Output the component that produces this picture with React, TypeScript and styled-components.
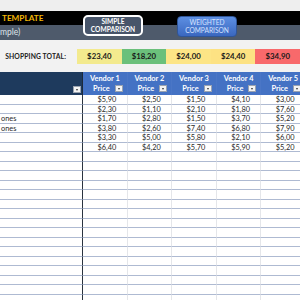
import { Fragment } from "react";
import styled, { createGlobalStyle } from "styled-components";

const GlobalStyle = createGlobalStyle`
  html, body {
    margin: 0;
    padding: 0;
    background: #ffffff;
  }
  body {
    width: 300px;
    height: 300px;
    overflow: hidden;
    font-family: "Lato", "Liberation Sans", sans-serif;
  }
`;

const Sheet = styled.div`
  width: 300px;
  height: 300px;
  overflow: hidden;
  display: flex;
  flex-direction: column;
`;

const TopStrip = styled.div`
  height: 11px;
  background: #eeeeee;
  flex-shrink: 0;
`;

const Banner = styled.div`
  height: 29px;
  flex-shrink: 0;
  display: flex;
  align-items: flex-start;
  background: linear-gradient(to bottom, #000 0 14px, #4e5a6b 14px 29px);
`;

const TitleColumn = styled.div`
  width: 83px;
  display: flex;
  flex-direction: column;
`;

const Title = styled.div`
  height: 14px;
  line-height: 14px;
  padding-left: 2px;
  color: #f2b705;
  font-weight: 700;
  font-size: 8.2px;
  white-space: nowrap;
`;

const Subtitle = styled.div`
  height: 15px;
  line-height: 15px;
  color: #dfe3ea;
  font-size: 8.5px;
  white-space: nowrap;
`;

const ModeButton = styled.div<{ $active?: boolean }>`
  box-sizing: border-box;
  width: 60px;
  height: 21px;
  margin-top: ${({ $active }) => ($active ? "4px" : "5px")};
  margin-left: ${({ $active }) => ($active ? "0" : "34px")};
  border-radius: ${({ $active }) => ($active ? "5px" : "4px")};
  border: ${({ $active }) => ($active ? "2px solid #ffffff" : "1px solid #2f5597")};
  background: ${({ $active }) =>
    $active ? "#48556a" : "linear-gradient(to bottom, #5d8fe2, #3a67bf)"};
  color: ${({ $active }) => ($active ? "#ffffff" : "#d6e2ff")};
  font-weight: ${({ $active }) => ($active ? 700 : 400)};
  font-size: 6.6px;
  line-height: 7.5px;
  display: flex;
  flex-direction: column;
  align-items: center;
  justify-content: center;
  text-align: center;
`;

const TotalsBar = styled.div`
  height: 32px;
  flex-shrink: 0;
  background: #f2f2f2;
  display: flex;
  align-items: flex-start;
  padding-top: 9px;
  box-sizing: border-box;
`;

const TotalsLabel = styled.div`
  width: 83px;
  height: 15px;
  line-height: 15px;
  padding-right: 11px;
  box-sizing: border-box;
  text-align: right;
  font-weight: 700;
  font-size: 6.8px;
  letter-spacing: 0.1px;
  color: #222;
  white-space: nowrap;
`;

const TotalCell = styled.div<{ $bg: string }>`
  width: 44.6px;
  height: 15px;
  line-height: 15px;
  flex-shrink: 0;
  text-align: center;
  background: ${({ $bg }) => $bg};
  font-weight: 700;
  font-size: 7.8px;
  color: #1a1a1a;
`;

const Grid = styled.div`
  display: grid;
  grid-template-columns: 83px repeat(5, 44.6px);
  grid-template-rows: 23px;
  grid-auto-rows: 9.5px;
`;

const HeadCell = styled.div<{ $first?: boolean }>`
  box-sizing: border-box;
  background: ${({ $first }) => ($first ? "#1e3a5d" : "#4472c4")};
  border-right: 1px solid ${({ $first }) => ($first ? "#1e2a3a" : "#4a76c6")};
  color: #ffffff;
  font-weight: 700;
  font-size: 7.4px;
  display: flex;
  flex-direction: column;
  align-items: center;
  justify-content: center;
  position: relative;
  line-height: 10px;
`;

const PriceLine = styled.div`
  display: flex;
  align-items: center;
  gap: 5px;
  padding-left: 6px;
`;

const Dropdown = styled.span<{ $abs?: boolean }>`
  box-sizing: border-box;
  width: 8px;
  height: 7px;
  background: #f3f3f3;
  border: 1px solid #9aa3b0;
  display: inline-flex;
  align-items: center;
  justify-content: center;
  ${({ $abs }) => ($abs ? "position: absolute; right: 1px; bottom: 2px;" : "")}
  &::after {
    content: "";
    border-left: 1.5px solid transparent;
    border-right: 1.5px solid transparent;
    border-top: 2px solid #333;
  }
`;

const Cell = styled.div<{ $first?: boolean }>`
  box-sizing: border-box;
  border-bottom: 1px solid #aebad2;
  border-right: 1px solid ${({ $first }) => ($first ? "#2a3340" : "#e4e6ea")};
  font-size: 7.4px;
  line-height: 9px;
  color: #2a2a2a;
  text-align: ${({ $first }) => ($first ? "left" : "center")};
  padding-left: ${({ $first }) => ($first ? "1px" : "4px")};
  white-space: nowrap;
  overflow: hidden;
`;

const totals = [
  { v: "$23,40", bg: "#f3ea8e" },
  { v: "$18,20", bg: "#6bc07b" },
  { v: "$24,00", bg: "#fde586" },
  { v: "$24,40", bg: "#fde283" },
  { v: "$34,90", bg: "#f8696b" },
];

const items = ["", "", "ones", "ones", "", ""];
const prices = [
  ["$5,90", "$2,50", "$1,50", "$4,10", "$3,00"],
  ["$2,30", "$1,10", "$2,10", "$1,80", "$7,60"],
  ["$1,70", "$2,80", "$1,50", "$3,70", "$5,20"],
  ["$3,80", "$2,60", "$7,40", "$6,80", "$7,90"],
  ["$3,30", "$5,00", "$5,80", "$2,10", "$6,00"],
  ["$6,40", "$4,20", "$5,70", "$5,90", "$5,20"],
];

const TOTAL_ROWS = 22;

export default function App() {
  const rows = Array.from({ length: TOTAL_ROWS }, (_, i) => ({
    item: items[i] ?? "",
    vals: prices[i] ?? ["", "", "", "", ""],
  }));

  return (
    <>
      <GlobalStyle />
      <Sheet>
        <TopStrip />
        <Banner>
          <TitleColumn>
            <Title>TEMPLATE</Title>
            <Subtitle>mple)</Subtitle>
          </TitleColumn>
          <ModeButton $active>
            <span>SIMPLE</span>
            <span>COMPARISON</span>
          </ModeButton>
          <ModeButton>
            <span>WEIGHTED</span>
            <span>COMPARISON</span>
          </ModeButton>
        </Banner>
        <TotalsBar>
          <TotalsLabel>SHOPPING TOTAL:</TotalsLabel>
          {totals.map((t) => (
            <TotalCell key={t.v} $bg={t.bg}>
              {t.v}
            </TotalCell>
          ))}
        </TotalsBar>
        <Grid>
          <HeadCell $first>
            <Dropdown $abs />
          </HeadCell>
          {[1, 2, 3, 4, 5].map((n) => (
            <HeadCell key={n}>
              <div>Vendor {n}</div>
              <PriceLine>
                Price
                <Dropdown />
              </PriceLine>
            </HeadCell>
          ))}
          {rows.map((r, i) => (
            <Fragment key={i}>
              <Cell $first>{r.item}</Cell>
              {r.vals.map((v, j) => (
                <Cell key={j}>{v}</Cell>
              ))}
            </Fragment>
          ))}
        </Grid>
      </Sheet>
    </>
  );
}
